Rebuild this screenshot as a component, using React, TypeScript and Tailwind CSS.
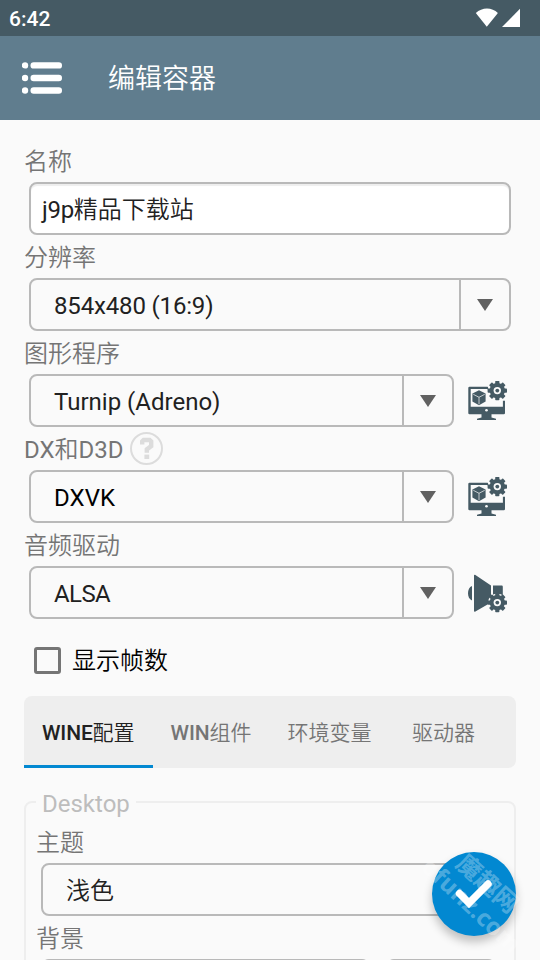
import type { ReactNode } from 'react'

interface Tab {
  id: string,
  latin?: string,
  title: string,
}

const tabs: Array<Tab> = [
  { id: 'wine', latin: 'WINE', title: '配置' },
  { id: 'win', latin: 'WIN', title: '组件' },
  { id: 'env', title: '环境变量' },
  { id: 'drives', title: '驱动器' },
]

const Gear = ({ cx, cy }: { cx: number, cy: number }) => (
  <g transform={`translate(${cx} ${cy})`}>
    <circle r="9.2" fill="#fafafa" />
    {[0, 45, 90, 135].map(a => (
      <rect key={a} x="-2.1" y="-9.7" width="4.2" height="19.4" rx="0.8" transform={`rotate(${a})`} />
    ))}
    <circle r="7.7" />
    <circle r="3.7" fill="#fafafa" />
    <circle r="1.9" />
  </g>
)

const DisplayConfigIcon = () => (
  <svg viewBox="0 0 40 40" className="size-10 fill-[#455a64]">
    <path d="M1.500 5.700h35.500V32.100a1.200 1.200 0 0 1-1.200 1.200H23.500V36.500l4.500 1.300V39H9v-1.200l4.500-1.300V33.300H1.500A1.200 1.200 0 0 1 .3 32.100V6.900A1.200 1.200 0 0 1 1.500 5.700zM2.700 7.900V25.700H34.900V7.900z" fillRule="evenodd" />
    <circle cx="18.500" cy="29.300" r="1.300" fill="#fafafa" />
    <path d="M11 9.300l6.600 3.300v8L11 24.300l-6.600-3.700v-8z" />
    <path d="M5.300 13.300L11 16.300l5.700-3M11 16.300v7" fill="none" stroke="#fafafa" strokeWidth="0.7" />
    <path d="M19.500 5h18v14.700h-4L24 18z" fill="#fafafa" />
    <Gear cx={29.3} cy={9.6} />
  </svg>
)

const AudioConfigIcon = () => (
  <svg viewBox="0 0 40 40" className="size-10 fill-[#455a64]">
    <path d="M4 13v14.500C1.300 26.500 0 23.500 0 20.300S1.300 14 4 13zM6 2.500c0-.8.8-1 1.400-.5L23 12.500v17L7.400 38.500C6.800 39 6 38.800 6 38zM25 12.500h8.500c.8 0 1.300.5 1.300 1.300V26H25z" />
    <Gear cx={29.3} cy={29.6} />
  </svg>
)

const HelpIcon = () => (
  <svg viewBox="0 0 34 34" className="-mt-0.5 ml-1.5 size-[34px] fill-none stroke-[#dcdcdc]">
    <circle cx="16.500" cy="16.500" r="15.500" strokeWidth="2" />
    <path d="M12.200 12.600V9.400l1.400-1.400h6l1.600 1.500v4.600l-4.400 3.300v3.400" strokeWidth="4.400" />
    <path d="M16.800 22.600v4.400" strokeWidth="4.800" />
  </svg>
)

const Label = ({ children }: { children: ReactNode }) => (
  <div className="flex h-[43px] items-center pt-[3px] font-[350] text-[#757575]">{children}</div>
)

const Select = ({ value, className = '' }: { value: string, className?: string }) => (
  <div className={`flex h-[53px] rounded-lg border-2 border-[#b9b9b9] ${className}`}>
    <span className="flex flex-1 items-center pl-[23px] pt-0.5">{value}</span>
    <span className="flex w-[50px] items-center justify-center border-l-2 border-[#b9b9b9]">
      <svg viewBox="0 0 16 12" className="h-3 w-4 fill-[#616161]">
        <path d="M0 0h16L8 12z" />
      </svg>
    </span>
  </div>
)

const Toolbar = () => (
  <>
    <div className="flex h-9 items-center justify-between bg-[#455a64] pl-[9px] pr-5 text-white">
      <span className="pt-0.5 text-[21px] font-medium">6:42</span>
      <svg viewBox="0 0 46 20" className="h-5 w-[46px] fill-white">
        <path d="M12.800 18.800L1.800 5C8 -1 18 -1 23.900 5z" />
        <path d="M46 .8V19H28z" />
      </svg>
    </div>
    <div className="flex h-[84px] items-center bg-[#607d8e] pl-[22px] text-white">
      <svg viewBox="0 0 40 32" className="h-8 w-10 fill-white">
        {[0.2, 12.8, 25.3].map(y => (
          <g key={y}>
            <circle cx="3" cy={y + 3.2} r="3.200" />
            <rect x="8.500" y={y} width="31.500" height="6.400" rx="3.200" />
          </g>
        ))}
      </svg>
      <h1 className="ml-[46px] pt-1 text-[27px] font-[350]">编辑容器</h1>
    </div>
  </>
)

const ConfirmButton = () => (
  <button className="absolute left-[432px] top-[852px] size-[84px] rounded-full bg-[#0288d1] shadow-[0_6px_10px_rgba(0,0,0,0.24)]">
    <svg viewBox="0 0 84 84" className="size-[84px] overflow-visible">
      <g fill="#fff" fillOpacity="0.3" className="font-['Open_Sans','Noto_Sans_CJK_SC',sans-serif] font-bold">
        <text x="22.500" y="13.500" fontSize="24.500" transform="rotate(42 22.5 13.5)">魔趣网</text>
        <text x="-12" y="17" fontSize="24" transform="rotate(43 -12 17)">ofunz.com</text>
      </g>
      <path d="M27.500 41.500l9.500 9.500L56 32" fill="none" stroke="#fff" strokeWidth="7.400" strokeLinecap="round" />
    </svg>
  </button>
)

const App = () => (
  <div className="relative h-[960px] w-[540px] overflow-hidden bg-[#fafafa] font-[Roboto,'Noto_Sans_CJK_SC',sans-serif] text-2xl text-[#212121]">
    <Toolbar />

    <main className="px-6 pt-[19px]">
      <Label>名称</Label>
      <div className="mx-[5px] flex h-[53px] items-center rounded-lg border-2 border-[#b9b9b9] bg-white pl-[11px] pt-0.5 shadow-[inset_0_2px_1px_#eee]">
        <span className="tracking-[-0.3px]">j9p</span>
        <span className="font-[350]">精品下载站</span>
      </div>

      <Label>分辨率</Label>
      <Select value="854x480 (16:9)" className="mx-[5px] tracking-[-0.16px]" />

      <Label>图形程序</Label>
      <div className="flex items-center">
        <Select value="Turnip (Adreno)" className="ml-[5px] mr-3.5 w-[425px]" />
        <DisplayConfigIcon />
      </div>

      <Label><span className="font-normal">DX</span>和<span className="font-normal">D3D</span><HelpIcon /></Label>
      <div className="flex items-center">
        <Select value="DXVK" className="ml-[5px] mr-3.5 w-[425px] text-black" />
        <DisplayConfigIcon />
      </div>

      <Label>音频驱动</Label>
      <div className="flex items-center">
        <Select value="ALSA" className="ml-[5px] mr-3.5 w-[425px] tracking-[-0.6px]" />
        <AudioConfigIcon />
      </div>

      <div className="flex h-[77px] items-center pl-[10px] pt-[5px] text-black">
        <span className="size-[27px] rounded-[3px] border-[3px] border-[#757575]" />
        <span className="ml-[11px] pt-px font-[350]">显示帧数</span>
      </div>

      <div className="flex h-[72px] overflow-hidden rounded-lg rounded-bl-none bg-[#eee] text-[21px] text-[#757575]">
        {tabs.map((t, i) => (
          <div
            key={t.id}
            className={`flex min-w-[108px] items-center justify-center border-b-[3px] px-[18px] pt-1 ${i === 0 ? 'border-[#0288d1] text-[#212121]' : 'border-transparent'}`}
          >
            {t.latin && <span className="font-medium tracking-[-0.15px]">{t.latin}</span>}
            <span className="font-[350]">{t.title}</span>
          </div>
        ))}
      </div>

      <section className="mt-[33px] h-[200px] rounded-lg border-2 border-[#eee] px-[10px]">
        <div className="-mt-[15px] flex h-8 w-fit items-center bg-[#fafafa] px-1.5 text-[#bdbdbd]">Desktop</div>
        <Label>主题</Label>
        <Select value="浅色" className="ml-[5px] font-[350]" />
        <Label>背景</Label>
        <div className="ml-[5px] flex gap-4">
          <Select value="" className="w-[329px] shrink-0" />
          <Select value="" className="w-[110px] shrink-0" />
        </div>
      </section>
    </main>

    <ConfirmButton />
  </div>
)

export default App
